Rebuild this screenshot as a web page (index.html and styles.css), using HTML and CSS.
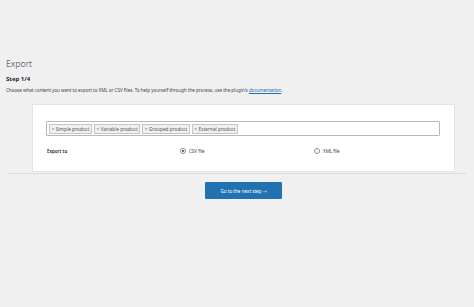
FILE: index.html
```html
<!DOCTYPE html>
<html>
<head>
<meta charset="utf-8">
<link rel="stylesheet" href="styles.css">
</head>
<body>
<div class="page">
  <h1 class="title">Export</h1>
  <h2 class="step">Step 1/4</h2>
  <p class="desc">Choose what content you want to export to XML or CSV files. To help yourself through the process, use the plugin's <a href="#">documentation</a>.</p>
  <div class="section">
    <div class="card">
      <div class="select">
        <span class="tag"><span class="x">×</span>Simple product</span>
        <span class="tag"><span class="x">×</span>Variable product</span>
        <span class="tag"><span class="x">×</span>Grouped product</span>
        <span class="tag"><span class="x">×</span>External product</span>
      </div>
      <div class="row">
        <span class="label">Export to</span>
        <span class="opt opt-csv"><span class="radio checked"></span>CSV file</span>
        <span class="opt opt-xml"><span class="radio"></span>XML file</span>
      </div>
    </div>
  </div>
  <div class="actions">
    <button class="btn">Go to the next step <span class="arrow">→</span></button>
  </div>
</div>
</body>
</html>
```
FILE: styles.css
```css
html, body {
  margin: 0;
  padding: 0;
  background: #f0f0f1;
  font-family: "Noto Sans", "Open Sans", sans-serif;
  color: #1d2327;
}
.page {
  padding-top: 57px;
  height: 250px;
}
.title {
  margin: 0 0 0 6px;
  font-family: "Open Sans", "Noto Sans", sans-serif;
  font-size: 8.8px;
  font-weight: 300;
  line-height: 14px;
  color: #1d2327;
}
.step {
  margin: 2px 0 0 6px;
  font-size: 6px;
  font-weight: 700;
  line-height: 12px;
}
.desc {
  margin: 2px 0 0 6px;
  font-size: 4.5px;
  line-height: 6px;
  color: #3c434a;
}
.desc a {
  color: #2271b1;
}
.section {
  margin: 11px 8px 0;
  padding: 0 11px 1px 24px;
  border-bottom: 1px solid #dcdcde;
}
.card {
  background: #fff;
  border: 1px solid #e2e4e7;
  height: 50px;
  padding: 16px 14px 0 13px;
}
.select {
  height: 13px;
  border: 1px solid #b5b8bc;
  border-radius: 1px;
  display: flex;
  align-items: center;
  gap: 2px;
  padding: 0 2px;
}
.tag {
  background: #f0f0f1;
  border: 1px solid #c3c4c7;
  font-size: 4.75px;
  line-height: 8px;
  padding: 0 1.5px;
  color: #50575e;
  display: flex;
  align-items: center;
}
.x {
  margin-right: 1.5px;
  color: #787c82;
}
.row {
  display: flex;
  align-items: center;
  margin-top: 11px;
  font-size: 4.5px;
  line-height: 8px;
  padding-left: 1px;
}
.label {
  width: 133px;
  font-weight: 600;
  color: #1d2327;
}
.opt {
  display: flex;
  align-items: center;
  color: #3c434a;
}
.opt-csv {
  width: 134px;
}
.radio {
  width: 4px;
  height: 4px;
  border: 0.7px solid #8c8f94;
  border-radius: 50%;
  margin-right: 3px;
  position: relative;
  background: #fff;
}
.radio.checked::after {
  content: "";
  position: absolute;
  left: 1px;
  top: 1px;
  width: 2px;
  height: 2px;
  border-radius: 50%;
  background: #3c434a;
}
.actions {
  display: flex;
  justify-content: center;
  padding: 8px 11px 0 24px;
}
.btn {
  width: 77px;
  height: 17px;
  background: #2271b1;
  border: 1px solid #2271b1;
  border-radius: 1px;
  color: #fff;
  font-family: "Noto Sans", sans-serif;
  font-size: 4.6px;
  padding: 0;
}
.arrow {
  font-family: "DejaVu Sans", sans-serif;
}
```
